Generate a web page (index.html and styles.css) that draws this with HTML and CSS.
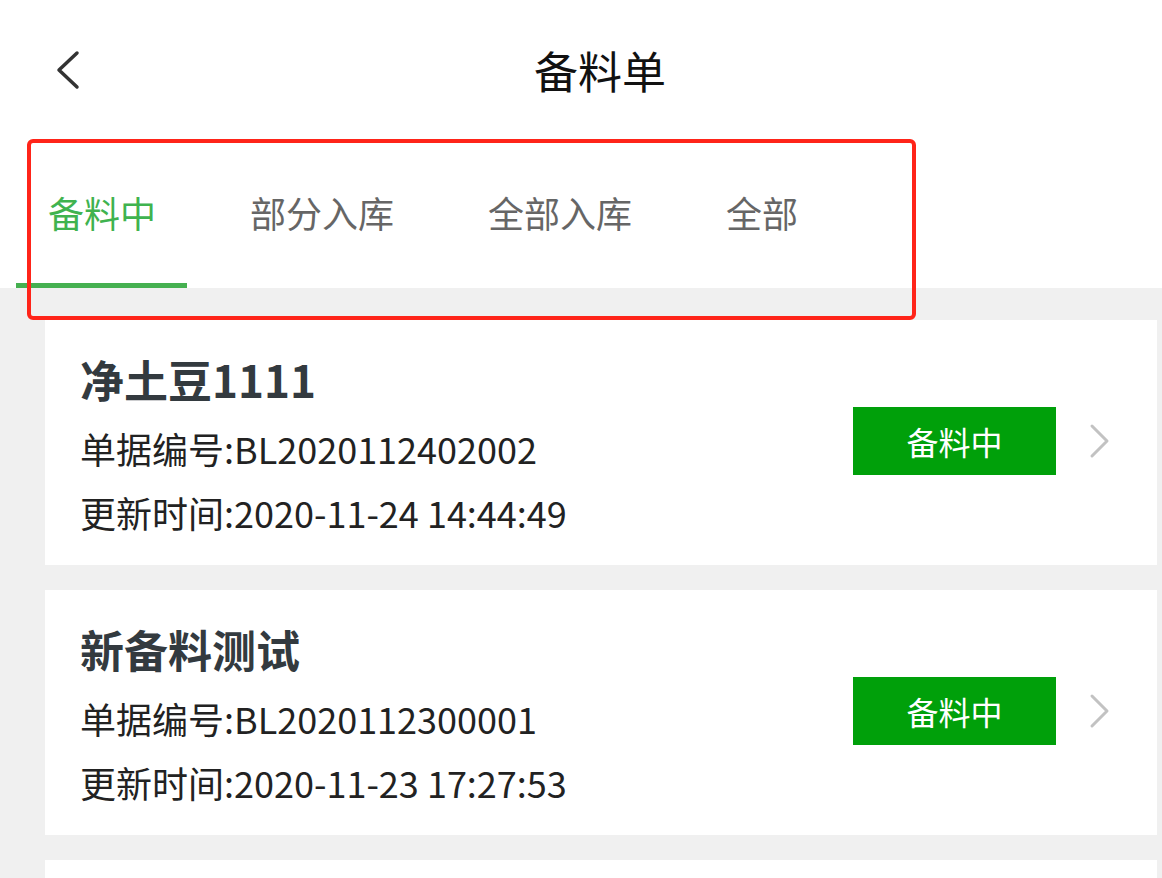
FILE: index.html
```html
<!DOCTYPE html>
<html lang="zh-CN">
<head>
    <meta charset="UTF-8">
    <meta name="viewport" content="width=device-width, initial-scale=1.0">
    <title>备料单</title>
    <link rel="stylesheet" href="styles.css">
</head>
<body>
    <div class="page">
        <div class="header">
            <span class="back">
                <svg width="30" height="40" viewBox="0 0 30 40">
                    <path d="M24 3 L6 20 L24 37" fill="none" stroke="#333" stroke-width="3.5" stroke-linecap="round" stroke-linejoin="round"/>
                </svg>
            </span>
            <h1>备料单</h1>
        </div>

        <div class="tabs">
            <div class="tab active">备料中</div>
            <div class="tab">部分入库</div>
            <div class="tab">全部入库</div>
            <div class="tab">全部</div>
        </div>

        <div class="list">
            <div class="card">
                <div class="info">
                    <div class="name">净土豆1111</div>
                    <div class="line">单据编号:BL2020112402002</div>
                    <div class="line">更新时间:2020-11-24 14:44:49</div>
                </div>
                <div class="status">备料中</div>
                <svg class="arrow" width="24" height="36" viewBox="0 0 24 36">
                    <path d="M4 3 L19 18 L4 33" fill="none" stroke="#c2c2c2" stroke-width="3" stroke-linecap="round" stroke-linejoin="round"/>
                </svg>
            </div>
            <div class="card">
                <div class="info">
                    <div class="name">新备料测试</div>
                    <div class="line">单据编号:BL2020112300001</div>
                    <div class="line">更新时间:2020-11-23 17:27:53</div>
                </div>
                <div class="status">备料中</div>
                <svg class="arrow" width="24" height="36" viewBox="0 0 24 36">
                    <path d="M4 3 L19 18 L4 33" fill="none" stroke="#c2c2c2" stroke-width="3" stroke-linecap="round" stroke-linejoin="round"/>
                </svg>
            </div>
            <div class="card"></div>
        </div>

        <div class="mark"></div>
    </div>
</body>
</html>
```

FILE: styles.css
```css
html, body {
    margin: 0;
    padding: 0;
    height: 100%;
    overflow: hidden;
}
body {
    font-family: "Noto Sans CJK SC", "Noto Sans", sans-serif;
    background-color: #f0f0f0;
    color: #222;
}
.page {
    position: relative;
    width: 1162px;
    height: 878px;
    overflow: hidden;
}
.header {
    height: 140px;
    background-color: white;
    display: flex;
    align-items: center;
    justify-content: center;
    padding-left: 38px;
    position: relative;
}
.back {
    position: absolute;
    left: 53px;
    top: 50px;
}
.header h1 {
    margin: 0;
    font-size: 44px;
    font-weight: normal;
    color: #111;
}
.tabs {
    height: 148px;
    background-color: white;
    display: flex;
}
.tab {
    padding: 0 47px 4px;
    display: flex;
    align-items: center;
    font-size: 36px;
    color: #666;
    position: relative;
}
.tab.active {
    color: #3fb34f;
    padding-left: 48px;
}
.tab.active::after {
    content: "";
    position: absolute;
    left: 16px;
    right: 16px;
    bottom: 0;
    height: 5px;
    background-color: #45b050;
}
.list {
    padding: 32px 5px 0 45px;
}
.card {
    background-color: white;
    display: flex;
    align-items: center;
    padding: 28px 45px 21px 35px;
    margin-bottom: 25px;
    min-height: 196px;
}
.info {
    flex: 1;
}
.name {
    font-size: 44px;
    font-weight: bold;
    line-height: 62px;
    color: #333a3f;
}
.line {
    font-size: 36px;
    line-height: 64px;
}
.name + .line {
    margin-top: 6px;
}
.status {
    width: 203px;
    height: 68px;
    background-color: #00a00a;
    color: white;
    font-size: 32px;
    display: flex;
    align-items: center;
    justify-content: center;
    margin-top: -11px;
}
.arrow {
    margin-left: 32px;
    margin-top: -11px;
}
.mark {
    position: absolute;
    left: 27px;
    top: 139px;
    width: 881px;
    height: 173px;
    border: 4px solid #ff2419;
    border-radius: 6px;
}
```
